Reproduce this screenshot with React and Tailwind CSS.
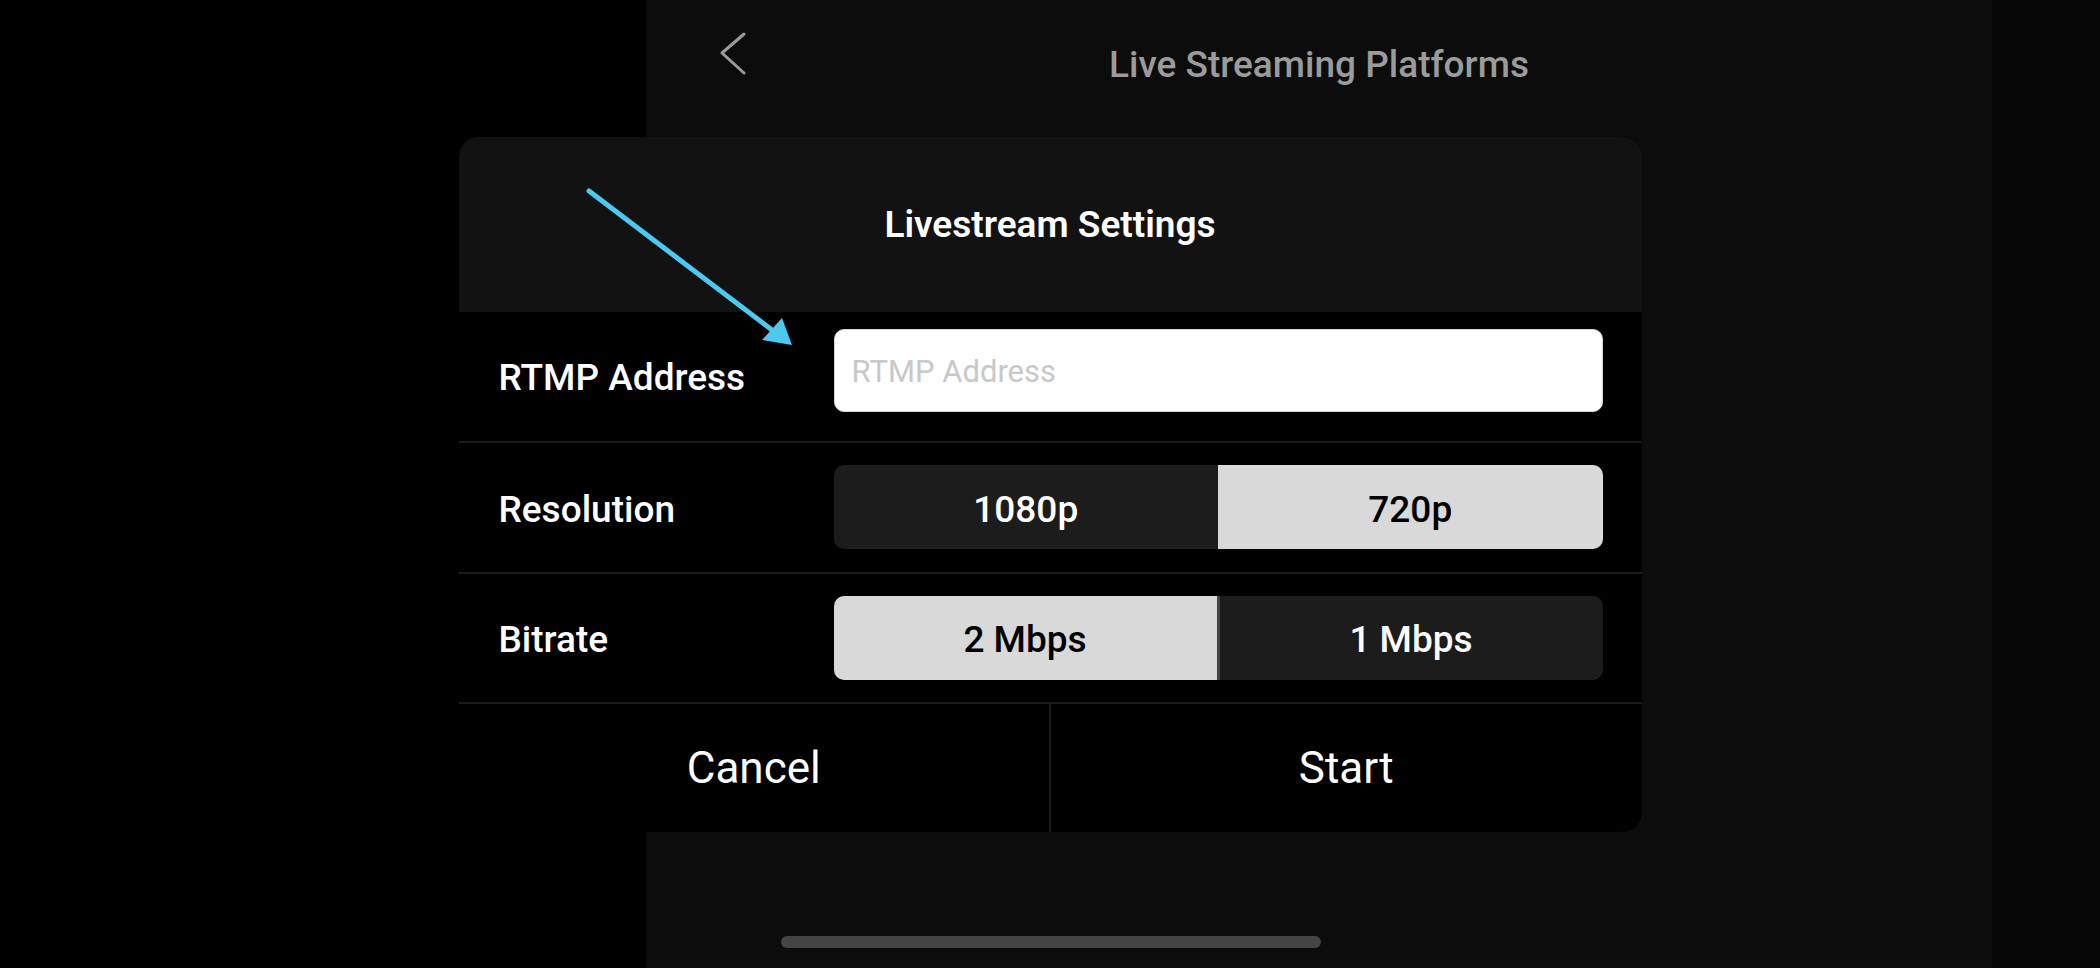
import React from "react";

const font = { fontFamily: "Roboto, 'Noto Sans', sans-serif" };

function Segmented({ options, active, divider }) {
  return (
    <div className="flex w-[769px] h-[84px] rounded-[10px] overflow-hidden">
      {options.map((o, i) => (
        <div
          key={o}
          className={
            (i === active ? "bg-[#d9d9d9] text-black " : "bg-[#1c1c1c] text-white ") +
            (i === 1 && divider ? "border-l-[3px] border-[#444444] " : "") +
            "flex-1 flex items-center justify-center pt-[5px] text-[37px] font-medium"
          }
        >
          {o}
        </div>
      ))}
    </div>
  );
}

export default function App() {
  return (
    <div className="relative w-[2100px] h-[968px] flex overflow-hidden bg-black" style={font}>
      <div className="w-[646px] bg-black" />
      <div className="w-[1346px] bg-[#0c0c0c] flex flex-col">
        <div className="grid grid-cols-[1fr_auto_1fr] h-[128px] items-start">
          <div className="pl-[73px] pt-[32px]">
            <svg width="28" height="44" viewBox="0 0 28 44" fill="none">
              <path d="M25 2 L3 21 L25 41" stroke="#9a9a9a" strokeWidth="3" strokeLinecap="round" strokeLinejoin="round" />
            </svg>
          </div>
          <div className="mt-[44px] leading-[42px] text-[37px] font-medium text-[#9b9b9b]">
            Live Streaming Platforms
          </div>
          <div />
        </div>
      </div>
      <div className="flex-1 bg-[#070707]" />

      {/* Modal overlay */}
      <div className="absolute inset-0 flex items-center justify-center">
        <div className="w-[1183px] h-[695px] rounded-[20px] overflow-hidden bg-black flex flex-col">
          <div className="h-[175px] bg-[#121212] flex items-center justify-center pt-[2px] text-white text-[37px] font-semibold">
            Livestream Settings
          </div>
          <div className="h-[129px] flex items-center justify-between pl-[40px] pr-[39px]">
            <span className="text-white text-[37px] font-medium pt-[3px]">RTMP Address</span>
            <input
              placeholder="RTMP Address"
              className="w-[769px] h-[83px] mb-[12px] rounded-[10px] bg-white border border-[#d4d4d4] pl-[17px] pt-[2px] text-[31px] text-black placeholder:text-[#c8c8c8] outline-none"
              style={font}
            />
          </div>
          <div className="h-[131px] border-t-2 border-[#1c1c1c] flex items-center justify-between pl-[40px] pr-[39px]">
            <span className="text-white text-[37px] font-medium pt-[5px]">Resolution</span>
            <Segmented options={["1080p", "720p"]} active={1} />
          </div>
          <div className="h-[130px] border-t-2 border-[#1c1c1c] flex items-center justify-between pl-[40px] pr-[39px]">
            <span className="text-white text-[37px] font-medium pt-[5px]">Bitrate</span>
            <Segmented options={["2 Mbps", "1 Mbps"]} active={0} divider />
          </div>
          <div className="flex-1 border-t-2 border-[#1c1c1c] flex">
            <button className="flex-1 flex items-center justify-center text-white text-[44px] font-normal border-r-2 border-[#1c1c1c]" style={font}>
              Cancel
            </button>
            <button className="flex-1 flex items-center justify-center text-white text-[44px] font-normal" style={font}>
              Start
            </button>
          </div>
        </div>
      </div>

      {/* Annotation arrow */}
      <svg className="absolute inset-0 pointer-events-none" width="2100" height="968" viewBox="0 0 2100 968">
        <line x1="589" y1="191" x2="772" y2="330" stroke="#4fc8f0" strokeWidth="5" strokeLinecap="round" />
        <polygon points="792,345 762,340 782,318" fill="#4fc8f0" />
      </svg>

      {/* Home indicator */}
      <div className="absolute left-[781px] top-[936px] w-[540px] h-[12px] rounded-full bg-[#444444]" />
    </div>
  );
}
